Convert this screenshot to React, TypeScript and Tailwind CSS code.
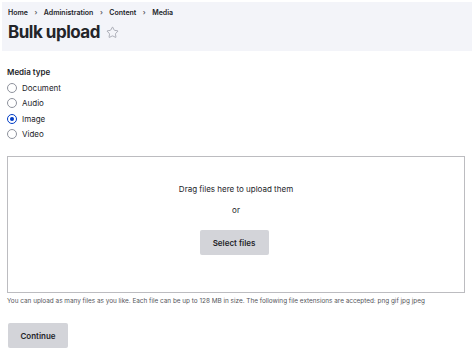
import { Star } from "lucide-react";

const TYPES = ["Document", "Audio", "Image", "Video"];

export default function App() {
  const selected = "Image";
  return (
    <div className="min-h-[357px] bg-white text-[#232429]" style={{ fontFamily: "Inter, 'Liberation Sans', sans-serif" }}>
      {/* header band */}
      <div className="mx-[2px] mt-[2px] h-[49px] bg-[#f3f4f9] px-[6px] pt-[6px]">
        <nav className="flex items-center gap-[6.5px] text-[7px] font-semibold leading-[9px]">
          <span>Home</span>
          <span className="text-[#55565b]">›</span>
          <span>Administration</span>
          <span className="text-[#55565b]">›</span>
          <span>Content</span>
          <span className="text-[#55565b]">›</span>
          <span>Media</span>
        </nav>
        <div className="mt-[3px] flex items-center gap-[6px]">
          <h1 className="text-[17px] font-bold leading-[24px] tracking-[-0.5px]">Bulk upload</h1>
          <Star className="h-[13px] w-[13px] text-[#8e929c]" strokeWidth={1.3} />
        </div>
      </div>

      {/* form */}
      <div className="px-[7px] pt-[16px]">
        <div className="text-[8px] font-semibold leading-[10px]">Media type</div>
        <div className="mt-[3px] flex flex-col">
          {TYPES.map((t) => (
            <label key={t} className="flex h-[15.5px] items-center gap-[5px] text-[8px]">
              {t === selected ? (
                <span className="flex h-[10px] w-[10px] items-center justify-center rounded-full border-[1.5px] border-[#003cc5]">
                  <span className="h-[4px] w-[4px] rounded-full bg-[#003cc5]" />
                </span>
              ) : (
                <span className="h-[10px] w-[10px] rounded-full border border-[#8e929c]" />
              )}
              <span>{t}</span>
            </label>
          ))}
        </div>

        {/* dropzone */}
        <div className="mt-[14px] flex h-[137px] w-[458px] flex-col items-center border border-[#bcbcc0] pt-[27px]">
          <div className="text-[8px] leading-[10px]">Drag files here to upload them</div>
          <div className="mt-[11px] text-[8px] leading-[10px]">or</div>
          <button className="ml-[-4px] mt-[15px] h-[25px] w-[69px] rounded-[2px] bg-[#d3d4d9] text-[8px] font-semibold">
            Select files
          </button>
        </div>
        <p className="mt-[4px] text-[6.4px] leading-[9px] text-[#55565b]">
          You can upload as many files as you like. Each file can be up to 128 MB in size. The following file extensions are accepted: png gif jpg jpeg
        </p>

        <button className="ml-px mt-[17px] h-[25px] w-[60px] rounded-[2px] bg-[#d3d4d9] text-[8px] font-semibold">
          Continue
        </button>
      </div>
    </div>
  );
}
